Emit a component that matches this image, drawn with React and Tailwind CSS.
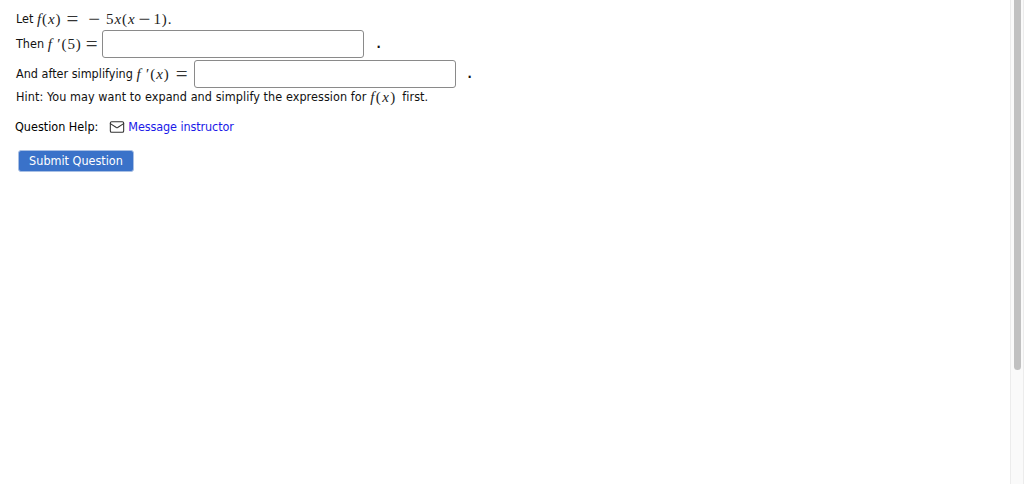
import { Mail } from "lucide-react";

function F({ children }) {
  return <span className="font-['Liberation_Serif',serif] text-[15px] tracking-[0.9px] text-[#222]">{children}</span>;
}

function Op({ children, className }) {
  return <span className={`font-['Liberation_Serif',serif] text-[21px] leading-none font-light text-[#333] ${className}`}>{children}</span>;
}

export default function App() {
  return (
    <div className="flex h-[484px] w-[1024px] overflow-hidden bg-white font-['DejaVu_Sans',sans-serif] font-stretch-condensed text-[12.5px] text-[#111]">
      <div className="flex-1 pl-4 pt-[9px]">
        <div className="flex h-5 items-center whitespace-pre">
          Let <F><i>f</i>(<i>x</i>)</F>
          <Op className="ml-[5px]">=</Op>
          <Op className="ml-[10px]">−</Op>
          <F><span className="ml-[6px]">5<i>x</i>(<i>x</i></span></F>
          <Op className="mx-[3px]">−</Op>
          <F>1).</F>
        </div>
        <div className="mt-[1px] flex h-7 items-center whitespace-pre">
          Then <F><i>f</i> ′(5)</F>
          <Op className="ml-[4px]">=</Op>
          <input className="ml-[4px] h-7 w-[262px] rounded-[3px] border border-[#8a8a8a] bg-white" />
          <span className="ml-[13px] font-bold">.</span>
        </div>
        <div className="mt-[2px] flex h-7 items-center whitespace-pre">
          And after simplifying <F><i>f</i> ′(<i>x</i>)</F>
          <Op className="ml-[6px]">=</Op>
          <input className="ml-[6px] h-7 w-[262px] rounded-[3px] border border-[#8a8a8a] bg-white" />
          <span className="ml-[12px] font-bold">.</span>
        </div>
        <div className="flex h-[18px] items-center whitespace-pre tracking-[0.07px]">
          Hint: You may want to expand and simplify the expression for <F><span className="tracking-[1.4px]"><i>f</i>(<i>x</i>)</span></F><span className="ml-[2px]"> first.</span>
        </div>
        <div className="mt-[12px] flex h-[18px] items-center -ml-px">
          <span className="text-[#000]">Question Help:</span>
          <Mail className="ml-[11px] h-4 w-4 text-[#333]" strokeWidth={1.6} />
          <a className="ml-[3px] tracking-[-0.1px] text-[#1a1ae8]">Message instructor</a>
        </div>
        <button className="ml-[2px] mt-[14px] h-[22px] w-[116px] rounded-[3px] border border-[#a9c0e4] bg-[#3a72c9] text-white">
          Submit Question
        </button>
      </div>
      <div className="h-full w-[14px] border-x border-[#ececec] bg-[#fafafa] pl-[3px]">
        <div className="h-[370px] w-[7px] rounded-b-[4px] bg-[#c1c1c1]" />
      </div>
    </div>
  );
}
